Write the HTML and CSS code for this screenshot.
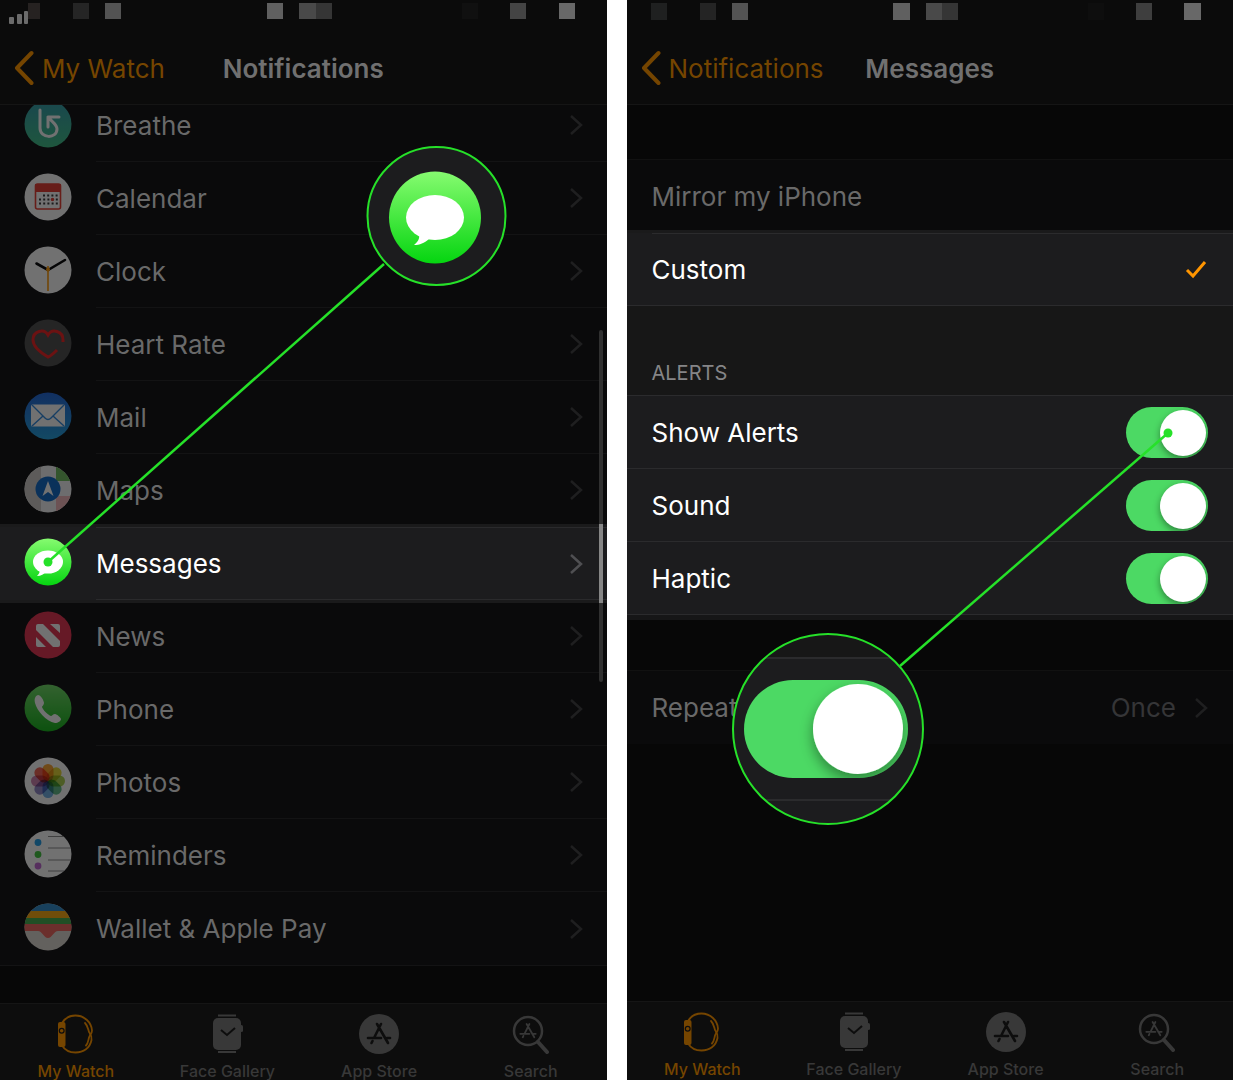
FILE: index.html
```html
<!DOCTYPE html>
<html lang="en">

<head>
    <meta charset="UTF-8">
    <meta name="viewport" content="width=device-width, initial-scale=1.0">
    <title>Watch Notifications</title>
    <link rel="stylesheet" href="styles.css">
</head>

<body>
    <!-- shared icons -->
    <svg class="defs" aria-hidden="true">
        <defs>
            <linearGradient id="gGreen" x1="0" y1="0" x2="0" y2="1">
                <stop offset="0" stop-color="#86fb70" />
                <stop offset="1" stop-color="#05d510" />
            </linearGradient>
            <linearGradient id="gPhone" x1="0" y1="0" x2="0" y2="1">
                <stop offset="0" stop-color="#6edb63" />
                <stop offset="1" stop-color="#10b414" />
            </linearGradient>
            <linearGradient id="gBreathe" x1="0" y1="0" x2="0" y2="1">
                <stop offset="0" stop-color="#2f9cab" />
                <stop offset="1" stop-color="#3cc084" />
            </linearGradient>
            <linearGradient id="gMail" x1="0" y1="0" x2="0" y2="1">
                <stop offset="0" stop-color="#1c63d8" />
                <stop offset="1" stop-color="#20a0dd" />
            </linearGradient>
            <clipPath id="round">
                <circle cx="24" cy="24" r="23.5" />
            </clipPath>
        </defs>
        <symbol id="chevron" viewBox="0 0 14 22">
            <path d="M2 2l10 9-10 9" fill="none" stroke="currentColor" stroke-width="2.5" />
        </symbol>
        <symbol id="back" viewBox="0 0 20 36">
            <path d="M17.5 3L3 18l14.5 15" fill="none" stroke="currentColor" stroke-width="4" stroke-linecap="round" stroke-linejoin="round" />
        </symbol>
        <symbol id="appA" viewBox="0 0 40 40">
            <g fill="none" stroke="currentColor" stroke-width="2.6" stroke-linecap="round">
                <path d="M22 10l-7 14M13.5 27l-1 2M18 10l11 19M9 24h13M28 24h3" />
            </g>
        </symbol>
        <symbol id="tabWatch" viewBox="0 0 40 40">
            <g fill="none" stroke="currentColor" stroke-width="1.8" stroke-linecap="round">
                <path d="M6 9C9 4 14 1.5 19.5 1.5c9 0 16 7 16.5 15 0 3-2 4-3 7-1 4-1 6-3 8" />
                <path d="M29 9c3 3 3 6 4 9 2 3 3 4 2.5 8-1.5 8-8 12.5-16 12.5-6 0-11-3-13.5-7" />
            </g>
            <rect x="2" y="8" width="7.5" height="25" rx="2" fill="currentColor" />
            <circle cx="5.7" cy="16.7" r="2.4" fill="currentColor" stroke="#0d0d0d" stroke-width="1.2" />
        </symbol>
        <symbol id="tabFace" viewBox="0 0 40 40">
            <rect x="6" y="4" width="28" height="32" rx="5" fill="currentColor" />
            <path d="M11 1.5h18M11 38h18" stroke="currentColor" stroke-width="2" />
            <rect x="33" y="11" width="3" height="7" rx="1.5" fill="currentColor" />
            <path d="M14 16l6 5 8-7" fill="none" stroke="#0d0d0d" stroke-width="2" />
        </symbol>
        <symbol id="tabStore" viewBox="0 0 40 40">
            <circle cx="20" cy="20" r="20" fill="currentColor" />
            <use href="#appA" width="40" height="40" color="#0d0d0d" />
        </symbol>
        <symbol id="tabSearch" viewBox="0 0 40 40">
            <circle cx="17" cy="17" r="14" fill="none" stroke="currentColor" stroke-width="2.5" />
            <path d="M27 28l9 10" stroke="currentColor" stroke-width="4" stroke-linecap="round" />
            <use href="#appA" x="3" y="3" width="28" height="28" />
        </symbol>
    </svg>

    <div class="screens">
        <section class="screen">
            <header class="top">
                <svg class="status" width="607" height="34" viewBox="0 0 607 34">
                    <g fill="#6b6b6b">
                        <rect x="9" y="17" width="5" height="7" rx="1" />
                        <rect x="17" y="14" width="5" height="10" rx="1" />
                        <rect x="24" y="11" width="4" height="13" rx="1" />
                    </g>
                    <rect x="28" y="3" width="12" height="16" fill="#262221" />
                    <rect x="73" y="3" width="16" height="16" fill="#252525" />
                    <rect x="105" y="3" width="16" height="16" fill="#535353" />
                    <rect x="267" y="3" width="16" height="16" fill="#606060" />
                    <rect x="299" y="3" width="17" height="16" fill="#494949" />
                    <rect x="316" y="3" width="16" height="16" fill="#353535" />
                    <rect x="462" y="3" width="16" height="16" fill="#101010" />
                    <rect x="510" y="3" width="16" height="16" fill="#444" />
                    <rect x="559" y="3" width="16" height="16" fill="#686868" />
                </svg>
                <nav class="nav">
                    <a href="#" class="back"><svg width="20" height="36"><use href="#back" /></svg>My Watch</a>
                    <h1>Notifications</h1>
                </nav>
            </header>

            <main class="list">
                <ul class="apps">
                    <li><a href="#">
                        <svg class="icon" viewBox="0 0 48 48">
                            <circle cx="24" cy="24" r="23.5" fill="url(#gBreathe)" />
                            <path d="M16 10v18c0 11 17 11 17 1 0-5-5-7-9-12M24 27V17h11" fill="none" stroke="#fff" stroke-width="3" stroke-linecap="round" stroke-linejoin="round" />
                        </svg>
                        <span class="label">Breathe<svg class="chev"><use href="#chevron" /></svg></span>
                    </a></li>
                    <li><a href="#">
                        <svg class="icon" viewBox="0 0 48 48">
                            <circle cx="24" cy="24" r="23.5" fill="#fff" />
                            <rect x="11.5" y="11" width="25" height="25" rx="2" fill="none" stroke="#e8392d" stroke-width="1.6" />
                            <path d="M11 11h26v8H11z" fill="#e8392d" />
                            <path d="M19 22.5h15M15 26.5h19M15 30.5h19" stroke="#333" stroke-width="2" stroke-dasharray="2 2.2" />
                            <circle cx="28.5" cy="26.5" r="1.7" fill="#e8392d" />
                        </svg>
                        <span class="label">Calendar<svg class="chev"><use href="#chevron" /></svg></span>
                    </a></li>
                    <li><a href="#">
                        <svg class="icon" viewBox="0 0 48 48">
                            <circle cx="24" cy="24" r="23.5" fill="#fff" />
                            <path d="M12.5 17.5L24 24l17-10" fill="none" stroke="#000" stroke-width="2.6" stroke-linecap="round" />
                            <path d="M24 20v25" stroke="#f90" stroke-width="1.6" />
                            <circle cx="24" cy="23.5" r="2" fill="#f90" />
                        </svg>
                        <span class="label">Clock<svg class="chev"><use href="#chevron" /></svg></span>
                    </a></li>
                    <li><a href="#">
                        <svg class="icon" viewBox="0 0 48 48">
                            <circle cx="24" cy="24" r="23.5" fill="#4a4a4a" />
                            <path d="M33 31c-3 3-6 6-9 7-5-3-15-9-15-17 0-9 11-12 15-5 4-7 15-4 15 5v2" fill="none" stroke="#f01d1d" stroke-width="3" />
                        </svg>
                        <span class="label">Heart Rate<svg class="chev"><use href="#chevron" /></svg></span>
                    </a></li>
                    <li><a href="#">
                        <svg class="icon" viewBox="0 0 48 48">
                            <circle cx="24" cy="24" r="23.5" fill="url(#gMail)" />
                            <rect x="7" y="12.5" width="34" height="22" rx="1.5" fill="#fff" />
                            <path d="M8 13l13 13c2 2 4 2 6 0l13-13M8 34l11-10M40 34L29 24" fill="none" stroke="#2a86dd" stroke-width="1.4" />
                        </svg>
                        <span class="label">Mail<svg class="chev"><use href="#chevron" /></svg></span>
                    </a></li>
                    <li><a href="#">
                        <svg class="icon" viewBox="0 0 48 48">
                            <g clip-path="url(#round)">
                                <path d="M0 0h48v48H0z" fill="#f6f6f6" />
                                <path d="M0 0h17v48H0z" fill="#cfccc8" />
                                <path d="M32 0h16v16H32z" fill="#6ebd5c" />
                                <path d="M32 31h16v17H32z" fill="#f3b6ba" />
                            </g>
                            <circle cx="24" cy="24" r="12.5" fill="#0c67c8" />
                            <path d="M24 16l5.5 15-5.5-4-5.5 4z" fill="#fff" />
                        </svg>
                        <span class="label">Maps<svg class="chev"><use href="#chevron" /></svg></span>
                    </a></li>
                    <li class="active"><a href="#">
                        <svg class="icon" viewBox="0 0 48 48">
                            <circle cx="24" cy="24" r="23.5" fill="url(#gGreen)" />
                            <ellipse cx="24" cy="24" rx="15" ry="11.5" fill="#fff" />
                            <path d="M16 31c0 3-1 5-3 7 4 0 7-2 9-4z" fill="#fff" />
                        </svg>
                        <span class="label">Messages<svg class="chev"><use href="#chevron" /></svg></span>
                    </a></li>
                    <li><a href="#">
                        <svg class="icon" viewBox="0 0 48 48">
                            <circle cx="24" cy="24" r="23.5" fill="#e62e4b" />
                            <path d="M14 13h5l17 17v4q0 2-2 2h-5L12 19v-4q0-2 2-2zM26 13h8q2 0 2 2v7zM12 26v8q0 2 2 2h8z" fill="#fff" />
                        </svg>
                        <span class="label">News<svg class="chev"><use href="#chevron" /></svg></span>
                    </a></li>
                    <li><a href="#">
                        <svg class="icon" viewBox="0 0 48 48">
                            <circle cx="24" cy="24" r="23.5" fill="url(#gPhone)" />
                            <path d="M14 11c-3 1-4 4-3 8 2 8 11 18 20 20 3 0 6-2 6-4 0-1-4-5-6-5-2 0-3 2-4 2-3-1-8-6-9-9 0-1 2-2 2-4 0-2-3-8-6-8z" fill="#fff" />
                        </svg>
                        <span class="label">Phone<svg class="chev"><use href="#chevron" /></svg></span>
                    </a></li>
                    <li><a href="#">
                        <svg class="icon petals" viewBox="0 0 48 48">
                            <circle cx="24" cy="24" r="23.5" fill="#fff" />
                            <rect x="18.5" y="7" width="11" height="17" rx="5.5" fill="#fda32b" />
                            <rect x="18.5" y="7" width="11" height="17" rx="5.5" fill="#e5d830" transform="rotate(45 24 24)" />
                            <rect x="18.5" y="7" width="11" height="17" rx="5.5" fill="#a9cf4a" transform="rotate(90 24 24)" />
                            <rect x="18.5" y="7" width="11" height="17" rx="5.5" fill="#5dbb85" transform="rotate(135 24 24)" />
                            <rect x="18.5" y="7" width="11" height="17" rx="5.5" fill="#6eaee4" transform="rotate(180 24 24)" />
                            <rect x="18.5" y="7" width="11" height="17" rx="5.5" fill="#8f86c6" transform="rotate(225 24 24)" />
                            <rect x="18.5" y="7" width="11" height="17" rx="5.5" fill="#ce7fae" transform="rotate(270 24 24)" />
                            <rect x="18.5" y="7" width="11" height="17" rx="5.5" fill="#f0604f" transform="rotate(315 24 24)" />
                        </svg>
                        <span class="label">Photos<svg class="chev"><use href="#chevron" /></svg></span>
                    </a></li>
                    <li><a href="#">
                        <svg class="icon" viewBox="0 0 48 48">
                            <g clip-path="url(#round)">
                                <path d="M0 0h48v48H0z" fill="#fff" />
                                <path d="M24 6.5h24M24 18h24M24 30h24M24 41h24" stroke="#888" />
                            </g>
                            <circle cx="14" cy="12.5" r="3.4" fill="#1b9be6" />
                            <circle cx="14" cy="24.5" r="3.4" fill="#3cc43a" />
                            <circle cx="14" cy="36" r="3.4" fill="#c062d0" />
                        </svg>
                        <span class="label">Reminders<svg class="chev"><use href="#chevron" /></svg></span>
                    </a></li>
                    <li><a href="#">
                        <svg class="icon" viewBox="0 0 48 48">
                            <g clip-path="url(#round)">
                                <path d="M0 0h48v48H0z" fill="#dedad2" />
                                <path d="M0 0h48v8H0z" fill="#2c8ccb" />
                                <path d="M0 8h48v7H0z" fill="#fdaa0a" />
                                <path d="M0 15h48v6H0z" fill="#3fae49" />
                                <path d="M0 21h48v7H34c-4 0-6 7-10 7s-6-7-10-7H0z" fill="#f1645a" />
                            </g>
                        </svg>
                        <span class="label">Wallet &amp; Apple Pay<svg class="chev"><use href="#chevron" /></svg></span>
                    </a></li>
                </ul>
                <div class="scrollbar"><i></i></div>
            </main>

            <nav class="tabs">
                <a href="#" class="on"><svg><use href="#tabWatch" /></svg>My Watch</a>
                <a href="#"><svg><use href="#tabFace" /></svg>Face Gallery</a>
                <a href="#"><svg><use href="#tabStore" /></svg>App Store</a>
                <a href="#"><svg><use href="#tabSearch" /></svg>Search</a>
            </nav>

            <!-- magnified Messages icon -->
            <svg class="callout left" width="607" height="600" viewBox="0 0 607 600">
                <path d="M384 264L48 562" stroke="#26e129" stroke-width="2.5" />
                <circle cx="48" cy="562" r="4.5" fill="#26e129" />
                <circle cx="436.5" cy="216" r="69" fill="#1c1c1e" stroke="#26e129" stroke-width="2" />
                <circle cx="435" cy="217.5" r="46" fill="url(#gGreen)" />
                <ellipse cx="435" cy="217.5" rx="29" ry="22.5" fill="#fff" />
                <path d="M419 234c1 4-1 8-5 11 6 0 10-2 15-6z" fill="#fff" />
            </svg>
        </section>

        <section class="screen">
            <header class="top">
                <svg class="status" width="607" height="34" viewBox="0 0 607 34">
                    <rect x="24" y="3" width="16" height="17" fill="#1f2020" />
                    <rect x="73" y="3" width="16" height="17" fill="#242424" />
                    <rect x="105" y="3" width="16" height="17" fill="#535353" />
                    <rect x="266" y="3" width="17" height="17" fill="#606060" />
                    <rect x="299" y="3" width="16" height="17" fill="#494949" />
                    <rect x="315" y="3" width="16" height="17" fill="#353535" />
                    <rect x="461" y="3" width="16" height="17" fill="#0e0e0e" />
                    <rect x="509" y="3" width="16" height="17" fill="#3e3e3e" />
                    <rect x="557" y="3" width="17" height="17" fill="#686868" />
                </svg>
                <nav class="nav">
                    <a href="#" class="back"><svg width="20" height="36"><use href="#back" /></svg>Notifications</a>
                    <h1>Messages</h1>
                </nav>
            </header>

            <main class="settings">
                <div class="group modes">
                    <label class="row">Mirror my iPhone<input type="radio" name="mode"></label>
                    <label class="row lit">Custom<input type="radio" name="mode" checked>
                        <svg class="tick" width="24" height="20" viewBox="0 0 24 20"><path d="M3 11l6 6L21 3" fill="none" stroke="#ff9500" stroke-width="3" /></svg>
                    </label>
                </div>
                <h2>ALERTS</h2>
                <div class="group alerts">
                    <label class="row lit">Show Alerts<input type="checkbox" class="switch" checked></label>
                    <label class="row lit">Sound<input type="checkbox" class="switch" checked></label>
                    <label class="row lit">Haptic<input type="checkbox" class="switch" checked></label>
                </div>
                <div class="group repeat">
                    <a href="#" class="row">Repeat<span class="value">Once</span><svg class="chev"><use href="#chevron" /></svg></a>
                </div>
            </main>

            <nav class="tabs raised">
                <a href="#" class="on"><svg><use href="#tabWatch" /></svg>My Watch</a>
                <a href="#"><svg><use href="#tabFace" /></svg>Face Gallery</a>
                <a href="#"><svg><use href="#tabStore" /></svg>App Store</a>
                <a href="#"><svg><use href="#tabSearch" /></svg>Search</a>
            </nav>

            <!-- magnified switch -->
            <svg class="callout right" width="606" height="840" viewBox="0 0 606 840">
                <defs>
                    <clipPath id="lens">
                        <circle cx="201" cy="729" r="95" />
                    </clipPath>
                    <filter id="soft" x="-30%" y="-30%" width="160%" height="160%">
                        <feDropShadow dx="0" dy="6" stdDeviation="7" flood-color="#000" flood-opacity=".4" />
                    </filter>
                    <clipPath id="pill">
                        <rect x="117" y="680" width="164" height="98" rx="49" />
                    </clipPath>
                </defs>
                <path d="M541 433L273 666" stroke="#26e129" stroke-width="2.5" />
                <circle cx="541" cy="433" r="4.5" fill="#26e129" />
                <g clip-path="url(#lens)">
                    <path d="M100 630h200v200H100z" fill="#1c1c1e" />
                    <path d="M100 630h200v28H100z" fill="#171717" />
                    <path d="M100 658h200M100 800h200" stroke="#2b2b2d" stroke-width="2" />
                </g>
                <rect x="117" y="680" width="164" height="98" rx="49" fill="#4cd964" />
                <g clip-path="url(#pill)">
                    <circle cx="231" cy="729" r="45" fill="#fff" filter="url(#soft)" />
                </g>
                <circle cx="201" cy="729" r="95" fill="none" stroke="#26e129" stroke-width="2" />
            </svg>
        </section>
    </div>
</body>

</html>
```
FILE: styles.css
```css
* {
    box-sizing: border-box;
}

body {
    margin: 0;
    background: #fff;
    font-family: Inter, "Liberation Sans", sans-serif;
    font-size: 26px;
    color: #696969;
}

a {
    color: inherit;
    text-decoration: none;
}

.defs {
    position: absolute;
    width: 0;
    height: 0;
}

.screens {
    display: grid;
    grid-template-columns: 1fr 1fr;
    gap: 20px;
    padding-right: 2px;
    min-height: 100vh;
}

.screen {
    position: relative;
    display: flex;
    flex-direction: column;
    min-width: 0;
    overflow: hidden;
    background: #070707;
}

/* header */
.top {
    background: #0b0b0b;
    border-bottom: 1px solid #151515;
}

.status {
    display: block;
}

.nav {
    display: grid;
    grid-template-columns: 1fr auto 1fr;
    align-items: center;
    height: 70px;
    padding: 0 14px 2px;
}

.back {
    display: flex;
    align-items: center;
    gap: 8px;
    color: #754500;
}

.nav h1 {
    margin: 0;
    font-size: 26px;
    font-weight: 600;
    color: #707070;
}

/* app list */
.list {
    position: relative;
    flex: 1;
    overflow: hidden;
}

.apps {
    list-style: none;
    margin: -16px 0 0;
    padding: 0;
    background: #0a0a0b;
}

.apps a {
    display: flex;
    align-items: center;
    gap: 24px;
    height: 73px;
    padding-left: 24px;
}

.apps li:last-child {
    border-bottom: 1px solid #131314;
}

.apps li:last-child .label {
    border-bottom: 0;
}

.icon {
    flex: none;
    width: 48px;
    height: 48px;
    margin-bottom: 4px;
    opacity: .42;
}

.petals rect {
    mix-blend-mode: multiply;
}

.label {
    flex: 1;
    display: flex;
    align-items: center;
    justify-content: space-between;
    height: 73px;
    padding-right: 24px;
    border-bottom: 1px solid #131314;
}

.chev {
    flex: none;
    width: 14px;
    height: 22px;
    color: #1f1f20;
}

.apps .active {
    position: relative;
    background: #1c1c1e;
    box-shadow: 0 0 0 3px #1a1a1b;
    color: #fff;
}

.active .icon {
    opacity: 1;
}

.active .label {
    border-top: 1px solid #2a2a2c;
    border-bottom-color: #2a2a2c;
}

.active .chev {
    color: #4f4f52;
}

.scrollbar {
    position: absolute;
    top: 225px;
    right: 4px;
    width: 4px;
    height: 352px;
    padding-top: 194px;
    border-radius: 2px;
    background: #303030;
}

.scrollbar i {
    display: block;
    height: 79px;
    background: #868686;
}

/* settings */
.settings {
    flex: 1;
}

.row {
    display: flex;
    align-items: center;
    height: 73px;
    margin-left: 25px;
    padding-right: 25px;
    border-bottom: 1px solid #131314;
}

.group {
    background: #0a0a0b;
    border-top: 1px solid #111;
}

.row.lit {
    color: #fff;
    margin-left: 0;
    padding-left: 25px;
    background: #1c1c1e;
    border-color: #2b2b2d;
}

.modes {
    margin-top: 54px;
}

.modes input {
    appearance: none;
    width: 0;
    height: 0;
    margin: 0 0 0 auto;
}

/* separator is drawn inside the lit row, inset like the others */
.modes .row.lit {
    background: linear-gradient(#2b2b2d, #2b2b2d) 25px 0 / 100% 1px no-repeat #1c1c1e;
    box-shadow: 0 -3px #1a1a1b;
}

.settings h2 {
    margin: 0;
    padding: 54px 25px 9px;
    background: #171717;
    font-size: 20px;
    line-height: 26px;
    font-weight: 400;
    color: #858587;
}

.alerts {
    border-color: #2b2b2d;
    border-bottom: 5px solid #161617;
}

.switch {
    appearance: none;
    position: relative;
    width: 82px;
    height: 51px;
    margin: 0 0 0 auto;
    border-radius: 26px;
    background: #4cd964;
    overflow: hidden;
}

.switch::before {
    content: "";
    position: absolute;
    top: 3px;
    right: 2px;
    width: 46px;
    height: 46px;
    border-radius: 50%;
    background: #fff;
    box-shadow: 0 3px 7px rgba(0, 0, 0, .4);
}

.repeat {
    margin-top: 50px;
}

.repeat .row {
    border-bottom: 0;
}

.value {
    margin-left: auto;
    margin-right: 18px;
    color: #353537;
}

/* tab bar */
.tabs {
    display: grid;
    grid-template-columns: repeat(4, 1fr);
    padding-top: 10px;
    background: #0d0d0d;
    border-top: 1px solid #151515;
    color: #383838;
    font-size: 16px;
    font-weight: 500;
    line-height: 18px;
}

.tabs a {
    display: flex;
    flex-direction: column;
    align-items: center;
    gap: 8px;
}

.tabs svg {
    width: 40px;
    height: 40px;
}

.tabs .on {
    color: #754500;
}

.raised {
    padding-bottom: 2px;
}

/* callouts drawn over the screens */
.callout {
    position: absolute;
    top: 0;
    pointer-events: none;
}

.callout.left {
    left: 0;
}

.callout.right {
    right: 0;
}
```
